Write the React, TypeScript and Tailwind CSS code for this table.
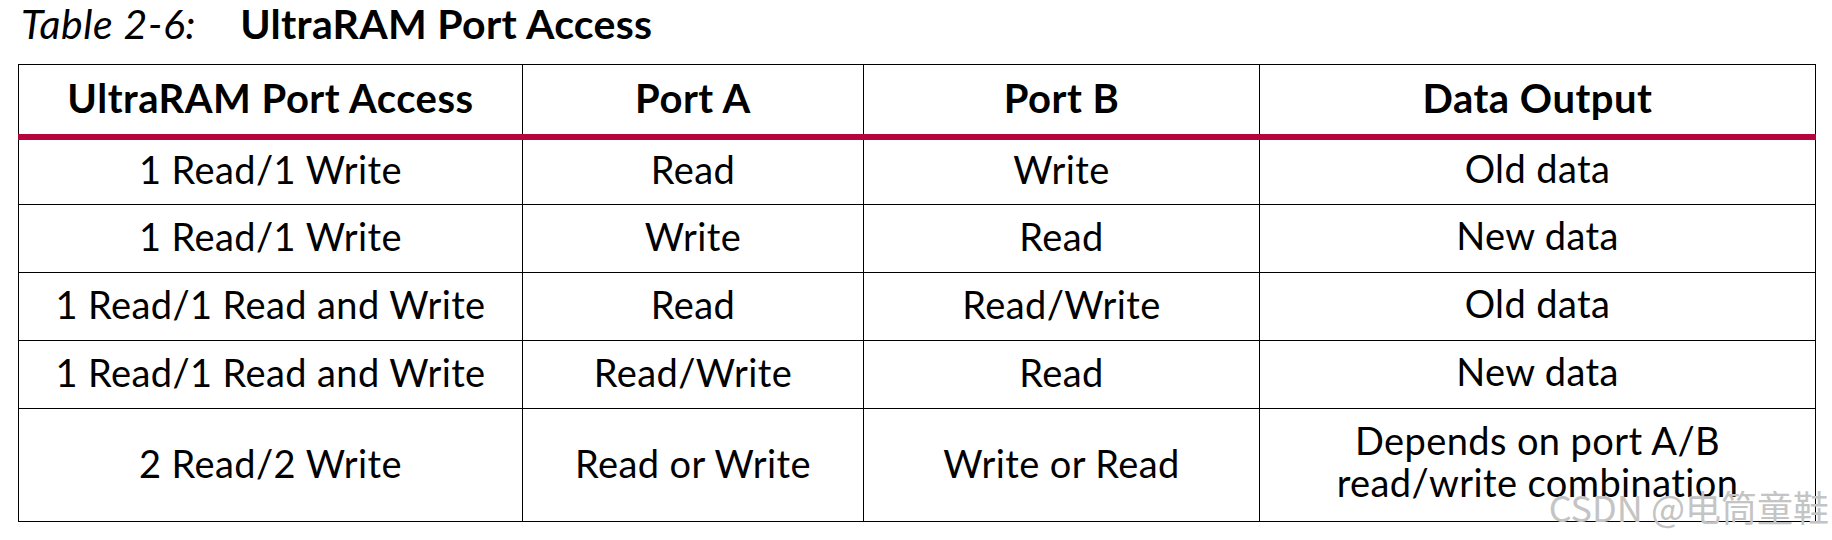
import React from 'react'

const rows: [string, string, string, string[]][] = [
  ['1 Read/1 Write', 'Read', 'Write', ['Old data']],
  ['1 Read/1 Write', 'Write', 'Read', ['New data']],
  ['1 Read/1 Read and Write', 'Read', 'Read/Write', ['Old data']],
  ['1 Read/1 Read and Write', 'Read/Write', 'Read', ['New data']],
  ['2 Read/2 Write', 'Read or Write', 'Write or Read', ['Depends on port A/B', 'read/write combination']],
]

const headers = ['UltraRAM Port Access', 'Port A', 'Port B', 'Data Output']

export default function App() {
  return (
    <div className="relative h-[540px] w-[1832px] overflow-hidden bg-white font-['Lato',sans-serif] text-black">
      <div className="flex items-baseline pl-[21px] pt-[1px] text-[41px] leading-[46px] tracking-[0.6px]">
        <span className="italic">Table 2-6:</span>
        <span className="ml-[44px] font-bold tracking-[0.3px]">UltraRAM Port Access</span>
      </div>

      <table className="ml-[18px] mt-[17px] table-fixed border-collapse">
        <colgroup>
          <col className="w-[504px]" />
          <col className="w-[341px]" />
          <col className="w-[396px]" />
          <col className="w-[556px]" />
        </colgroup>
        <thead>
          <tr className="h-[72px]">
            {headers.map((h) => (
              <th
                key={h}
                className="border-x-[1.5px] border-t-[1.5px] border-b-[6px] border-x-black border-t-black border-b-[#b5053c] p-0 pb-[2px] text-center text-[40px] font-bold tracking-[0.5px]"
              >
                {h}
              </th>
            ))}
          </tr>
        </thead>
        <tbody>
          {rows.map((r, i) => (
            <tr key={i} className={i === rows.length - 1 ? 'h-[113px]' : 'h-[68px]'}>
              {r.slice(0, 3).map((c, j) => (
                <td key={j} className="border-[1.5px] border-black p-0 pb-[4px] text-center text-[38px] tracking-[0.4px]">
                  {c as string}
                </td>
              ))}
              <td className="border-[1.5px] border-black p-0 pb-[8px] text-center text-[38px] leading-[42px] tracking-[0.4px]">
                {(r[3] as string[]).map((l) => (
                  <div key={l}>{l}</div>
                ))}
              </td>
            </tr>
          ))}
        </tbody>
      </table>

      <div className="absolute bottom-[16px] right-[3px] font-['Noto_Sans_CJK_SC',sans-serif] text-[36px] font-normal leading-none text-[#c4c4c4]">
        CSDN @电筒童鞋
      </div>
    </div>
  )
}
